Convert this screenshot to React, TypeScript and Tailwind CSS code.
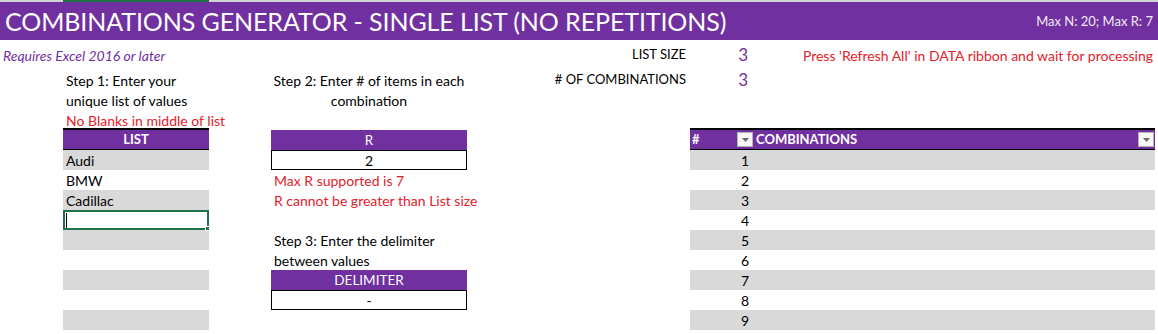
import type { ReactNode } from "react"

const PURPLE = "bg-[#7030a0]"

function DropButton() {
  return (
    <div className="flex h-[15px] w-[16px] items-center justify-center border border-[#b4b4b4] bg-[#f7f7f7]">
      <svg width="7" height="4" viewBox="0 0 7 4">
        <path d="M0 0h7L3.5 4z" fill="#6b6b6b" />
      </svg>
    </div>
  )
}

function Cell({ className = "", children }: { className?: string; children?: ReactNode }) {
  return <div className={`flex items-center whitespace-nowrap ${className}`}>{children}</div>
}

export default function App() {
  const listRows = ["Audi", "BMW", "Cadillac", "", "", "", "", "", "", ""]
  const combos = [1, 2, 3, 4, 5, 6, 7, 8, 9]

  return (
    <div className="h-[334px] w-[1158px] overflow-hidden bg-white font-['Lato',sans-serif] text-[14px] text-black">
      {/* column header strip */}
      <div className="flex h-[2px] bg-[#d4d4d4]">
        <div className="w-[63px]" />
        <div className="w-[146px] bg-[#217346]" />
      </div>

      {/* Title bar */}
      <div className={`flex h-[38px] items-center justify-between pl-[5px] pr-[5px] ${PURPLE}`}>
        <h1 className="text-[25px] leading-none tracking-[-0.1px] text-white">
          COMBINATIONS GENERATOR - SINGLE LIST (NO REPETITIONS)
        </h1>
        <span className="pt-[2px] text-[13px] text-[#f1eaf6]">Max N: 20; Max R: 7</span>
      </div>

      {/* Sheet */}
      <div className="grid grid-cols-[63px_146px_62px_196px_223px_65px_400px_3px] grid-rows-[30px_repeat(15,20px)]">
        {/* row 1 */}
        <Cell className="col-start-1 col-span-3 row-start-1 pl-[3px] italic text-[#7030a0]">
          Requires Excel 2016 or later
        </Cell>
        <Cell className="col-start-5 row-start-1 justify-end pr-[4px] text-[13px]">LIST SIZE</Cell>
        <Cell className="col-start-6 row-start-1 justify-end pr-[7px] text-[17px] text-[#7030a0]">3</Cell>
        <Cell className="col-start-7 row-start-1 justify-end pr-[2px] text-[#e3212b]">
          Press 'Refresh All' in DATA ribbon and wait for processing
        </Cell>

        {/* row 2-4: instructions */}
        <Cell className="col-start-2 row-start-2 pl-[3px]">Step 1: Enter your</Cell>
        <Cell className="col-start-2 row-start-3 pl-[3px]">unique list of values</Cell>
        <Cell className="col-start-2 row-start-4 pl-[3px] text-[#e3212b]">No Blanks in middle of list</Cell>
        <Cell className="col-start-4 row-start-2 justify-center">Step 2: Enter # of items in each</Cell>
        <Cell className="col-start-4 row-start-3 justify-center">combination</Cell>
        <Cell className="col-start-5 row-start-2 justify-end pr-[4px] text-[13px]"># OF COMBINATIONS</Cell>
        <Cell className="col-start-6 row-start-2 justify-end pr-[7px] text-[17px] text-[#7030a0]">3</Cell>

        {/* LIST table */}
        <Cell
          className={`relative z-10 col-start-2 row-start-5 justify-center border-b border-black text-[13px] font-bold text-white shadow-[0_-2px_0_0_#000] ${PURPLE}`}
        >
          LIST
        </Cell>
        <div className="col-start-2 row-start-6 row-span-10 flex flex-col">
          {listRows.map((v, i) =>
            i === 3 ? (
              <div key={i} className="relative flex h-[20px] items-center border-2 border-[#217346] pl-[1px]">
                <div className="h-[15px] w-[1px] bg-black" />
                <div className="absolute -bottom-[3px] -right-[3px] h-[5px] w-[5px] border border-white bg-[#217346]" />
              </div>
            ) : (
              <div
                key={i}
                className={`flex h-[20px] items-center pl-[3px] ${i % 2 === 0 ? "bg-[#d9d9d9]" : "bg-white"}`}
              >
                {v}
              </div>
            )
          )}
        </div>

        {/* R table */}
        <Cell className={`col-start-4 row-start-5 justify-center text-[13.5px] text-white ${PURPLE}`}>R</Cell>
        <Cell className="col-start-4 row-start-6 justify-center border border-black">2</Cell>
        <Cell className="col-start-4 row-start-7 pl-[3px] text-[#e3212b]">Max R supported is 7</Cell>
        <Cell className="col-start-4 row-start-8 pl-[3px] text-[#e3212b]">R cannot be greater than List size</Cell>
        <Cell className="col-start-4 row-start-10 pl-[3px]">Step 3: Enter the delimiter</Cell>
        <Cell className="col-start-4 row-start-11 pl-[3px]">between values</Cell>
        <Cell className={`col-start-4 row-start-12 justify-center text-[13.5px] text-white ${PURPLE}`}>DELIMITER</Cell>
        <Cell className="col-start-4 row-start-13 justify-center border border-black">-</Cell>

        {/* COMBINATIONS table */}
        <div
          className={`relative z-10 col-start-6 col-span-2 row-start-5 flex items-center border-b border-black text-[13px] font-bold text-white shadow-[0_-2px_0_0_#000] ${PURPLE}`}
        >
          <div className="flex w-[65px] items-center justify-between pl-[2px] pr-[2px]">
            <span>#</span>
            <DropButton />
          </div>
          <div className="flex flex-1 items-center justify-between pl-[1px] pr-[1px]">
            <span>COMBINATIONS</span>
            <DropButton />
          </div>
        </div>
        <div className="col-start-6 col-span-2 row-start-6 row-span-9 flex flex-col">
          {combos.map((n) => (
            <div key={n} className={`flex h-[20px] items-center ${n % 2 === 1 ? "bg-[#d9d9d9]" : "bg-white"}`}>
              <span className="w-[65px] pr-[6px] text-right">{n}</span>
            </div>
          ))}
        </div>
      </div>
    </div>
  )
}
